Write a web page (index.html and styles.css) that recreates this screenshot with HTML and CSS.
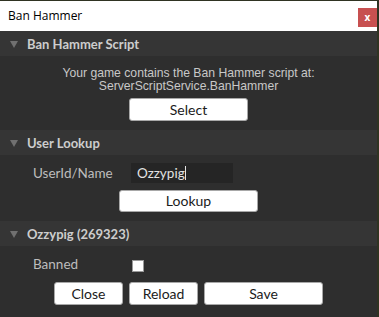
FILE: index.html
```html
<!doctype html>
<html lang="en">
    <head>
        <meta charset="utf-8">
        <title>Ban Hammer</title>
        <meta name="viewport" content="width=device-width, initial-scale=1">
        <link rel="stylesheet" href="styles.css">
    </head>
    <body>
        <div class="window">
            <div class="titlebar">
                <div class="title">Ban Hammer</div>
                <div class="close">x</div>
            </div>

            <div class="section">
                <div class="header"><span class="arrow"></span>Ban Hammer Script</div>
                <div class="content script">
                    <div class="info">Your game contains the Ban Hammer script at:<br>ServerScriptService.BanHammer</div>
                    <div class="buttons">
                        <div class="button wide">Select</div>
                    </div>
                </div>
            </div>

            <div class="section">
                <div class="header"><span class="arrow"></span>User Lookup</div>
                <div class="content lookup">
                    <div class="field">
                        <div class="label">UserId/Name</div>
                        <div class="input">Ozzypig<span class="caret"></span></div>
                    </div>
                    <div class="buttons">
                        <div class="button wider">Lookup</div>
                    </div>
                </div>
            </div>

            <div class="section">
                <div class="header"><span class="arrow"></span>Ozzypig (269323)</div>
                <div class="content user">
                    <div class="field">
                        <div class="label">Banned</div>
                        <div class="checkbox"></div>
                    </div>
                    <div class="buttons">
                        <div class="button small">Close</div>
                        <div class="button small">Reload</div>
                        <div class="button wide">Save</div>
                    </div>
                </div>
            </div>
        </div>
    </body>
</html>
```

FILE: styles.css
```css
html, body {
    margin: 0;
    height: 100%;
}

body {
    background-color: #2f3322;
    font-family: Lato, "Open Sans", sans-serif;
}

.window {
    box-sizing: border-box;
    width: 377px;
    height: 100%;
    margin-top: 1px;
    background-color: #2e2e2e;
}

.titlebar {
    display: flex;
    height: 30px;
    background-color: #fff;
}

.title {
    padding-left: 8px;
    line-height: 30px;
    font-family: "Open Sans", "Noto Sans", sans-serif;
    font-size: 12px;
    color: #000;
}

.close {
    margin-left: auto;
    margin-top: 7px;
    width: 19px;
    height: 19px;
    background-color: #c75050;
    color: #fff;
    font-family: "Open Sans", sans-serif;
    font-weight: bold;
    font-size: 10px;
    line-height: 18px;
    text-align: center;
}

.header {
    display: flex;
    align-items: center;
    height: 25px;
    padding-left: 10px;
    background-color: #353535;
    color: #cdcdcd;
    font-weight: bold;
    font-size: 13px;
}

.arrow {
    width: 0;
    height: 0;
    border-left: 4px solid transparent;
    border-right: 4px solid transparent;
    border-top: 7px solid #707070;
    margin-right: 9px;
    margin-top: 1px;
}

.content {
    box-sizing: border-box;
}

.script {
    padding: 11px 0 9px;
}

.info {
    font-family: "Liberation Sans", Arial, sans-serif;
    font-size: 12.2px;
    line-height: 13px;
    color: #c8c8c8;
    text-align: center;
    margin-bottom: 5px;
}

.lookup {
    padding: 8px 0 9px;
}

.user {
    padding: 10px 0 0;
}

.field {
    display: flex;
    align-items: flex-start;
}

.label {
    width: 98px;
    padding-left: 33px;
    font-size: 13.5px;
    line-height: 16px;
    color: #bdbdbd;
}

.lookup .label {
    line-height: 20px;
}

.input {
    display: flex;
    align-items: center;
    box-sizing: border-box;
    width: 102px;
    height: 20px;
    padding-left: 6px;
    background-color: #252525;
    color: #e2e2e2;
    font-size: 13.5px;
}

.caret {
    width: 1px;
    height: 14px;
    background-color: #e2e2e2;
}

.checkbox {
    box-sizing: border-box;
    width: 12px;
    height: 12px;
    margin-top: 4px;
    margin-left: 1px;
    background-color: #fff;
    border: 1px solid #9a9a9a;
}

.buttons {
    display: flex;
    justify-content: center;
    gap: 6px;
}

.lookup .buttons {
    margin-top: 7px;
}

.user .buttons {
    margin-top: 10px;
}

.button {
    box-sizing: border-box;
    height: 23px;
    background-color: #fff;
    border: 1px solid #a8a8a8;
    border-radius: 3px;
    color: #1b1b1b;
    font-size: 14px;
    line-height: 21px;
    text-align: center;
}

.small {
    width: 69px;
}

.wide {
    width: 119px;
}

.wider {
    width: 139px;
    height: 22px;
    line-height: 20px;
}
```
